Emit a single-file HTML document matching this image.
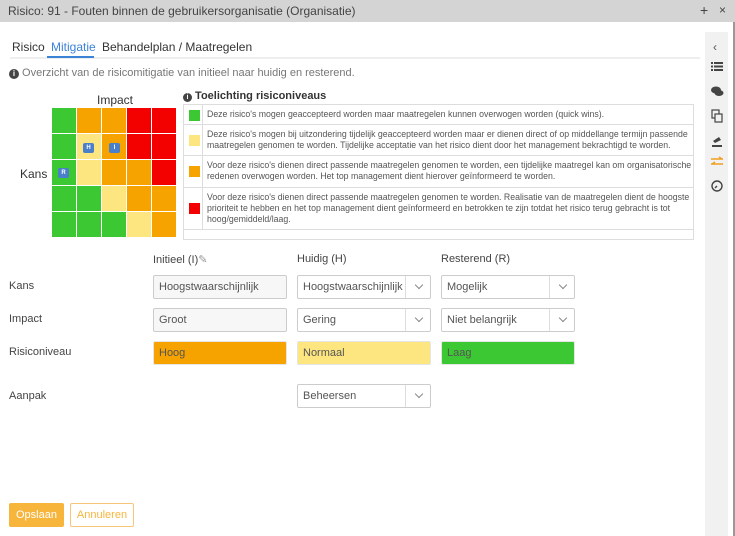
<!DOCTYPE html>
<html><head><style>
*{box-sizing:border-box;margin:0;padding:0}
body{width:735px;height:536px;background:#fff;font-family:"Liberation Sans",sans-serif;font-size:11px;color:#333;position:relative;overflow:hidden}
.a{position:absolute}
.title{left:0;top:0;width:735px;height:22px;background:#d4d4d4;font-size:12px;color:#444;padding:4px 0 0 8px}
.side{left:705px;top:32px;width:23px;height:504px;background:#f1f1f1}
.tab{top:40px;font-size:12px;color:#333}
.cell{position:absolute;width:24px;height:25px}
.G{background:#3cc832}.O{background:#f6a300}.R{background:#f30000}.Y{background:#fde680}
.badge{position:absolute;width:11px;height:10px;background:#4a7fc9;border-radius:2px;color:#fff;font-size:6px;text-align:center;line-height:10px;font-weight:bold}
.lg{left:183px;width:511px;border:1px solid #ddd;border-top:none;font-size:8.75px;color:#555;line-height:11px}
.sw{position:absolute;left:5px;width:11px;height:11px}
.lt{position:absolute;left:18px;top:0;bottom:0;border-left:1px solid #ddd;padding:4px 0 0 4px;right:0}
.lab{left:9px;font-size:11px;color:#444}
.hd{top:253px;font-size:11px;color:#444}
.in{width:134px;height:24px;border:1px solid #ccc;border-radius:2px;font-size:11px;color:#555;padding:5px 0 0 5px}
.dd{background:#fff}.dd:after{content:"";position:absolute;right:0;top:0;width:24px;height:22px;border-left:1px solid #ddd}
.chev{position:absolute;right:8px;top:6px;width:6px;height:6px;border-right:1.5px solid #888;border-bottom:1.5px solid #888;transform:rotate(45deg)}
</style></head><body>
<div class="a title">Risico: 91 - Fouten binnen de gebruikersorganisatie (Organisatie)<span class="a" style="left:700px;top:2px;font-size:14px">+</span><span class="a" style="left:719px;top:3px;font-size:12px">×</span></div>
<div class="a" style="left:733px;top:22px;width:2px;height:514px;background:#999"></div>
<div class="a side"></div>
<div class="a" style="left:713px;top:40px;font-size:12px;color:#555">‹</div>
<svg class="a" style="left:710px;top:61px" width="14" height="140" viewBox="0 0 14 140" fill="#444">
<rect x="1" y="1" width="2" height="2"/><rect x="4" y="1" width="9" height="2"/><rect x="1" y="4.5" width="2" height="2"/><rect x="4" y="4.5" width="9" height="2"/><rect x="1" y="8" width="2" height="2"/><rect x="4" y="8" width="9" height="2"/>
<ellipse cx="6" cy="29" rx="5" ry="3.5"/><ellipse cx="9" cy="32" rx="4.5" ry="3"/>
<rect x="2" y="49" width="7" height="8" fill="none" stroke="#444" stroke-width="1.2"/><rect x="5" y="53" width="7" height="8" fill="#f1f1f1" stroke="#444" stroke-width="1.2"/>
<path d="M2 84h10v2H2zM3 80l6-4 2 3-6 3z"/>
<path d="M1 98h12M9 96l3 2M1 103h12M5 101l-3 2" stroke="#f0a020" stroke-width="1.4" fill="none"/>
<circle cx="7" cy="125" r="5" fill="none" stroke="#444" stroke-width="1.4"/><path d="M7 125l-2 2" stroke="#444" stroke-width="1.4"/>
</svg>
<div class="a tab" style="left:12px">Risico</div>
<div class="a tab" style="left:51px;color:#3b83d6">Mitigatie</div>
<div class="a tab" style="left:102px">Behandelplan / Maatregelen</div>
<div class="a" style="left:10px;top:57px;width:690px;height:2px;background:#eee"></div>
<div class="a" style="left:47px;top:56px;width:47px;height:2px;background:#3b83d6"></div>
<div class="a" style="left:9px;top:67px;font-size:11px;color:#777"><span style="display:inline-block;width:10px;height:10px;border-radius:50%;background:#444;color:#fff;font-size:8px;text-align:center;line-height:10px;font-weight:bold">i</span> Overzicht van de risicomitigatie van initieel naar huidig en resterend.</div>
<div class="a" style="left:97px;top:93px;font-size:12px;color:#333">Impact</div>
<div class="a" style="left:20px;top:167px;font-size:12px;color:#333">Kans</div>
<div class="a" style="left:52px;top:108px;width:124px;height:130px">
<div class="cell G" style="left:0;top:0"></div><div class="cell O" style="left:25px;top:0"></div><div class="cell O" style="left:50px;top:0"></div><div class="cell R" style="left:75px;top:0"></div><div class="cell R" style="left:100px;top:0"></div>
<div class="cell G" style="left:0;top:26px"></div><div class="cell Y" style="left:25px;top:26px"></div><div class="cell O" style="left:50px;top:26px"></div><div class="cell R" style="left:75px;top:26px"></div><div class="cell R" style="left:100px;top:26px"></div>
<div class="cell G" style="left:0;top:52px"></div><div class="cell Y" style="left:25px;top:52px"></div><div class="cell O" style="left:50px;top:52px"></div><div class="cell O" style="left:75px;top:52px"></div><div class="cell R" style="left:100px;top:52px"></div>
<div class="cell G" style="left:0;top:78px"></div><div class="cell G" style="left:25px;top:78px"></div><div class="cell Y" style="left:50px;top:78px"></div><div class="cell O" style="left:75px;top:78px"></div><div class="cell O" style="left:100px;top:78px"></div>
<div class="cell G" style="left:0;top:104px"></div><div class="cell G" style="left:25px;top:104px"></div><div class="cell G" style="left:50px;top:104px"></div><div class="cell Y" style="left:75px;top:104px"></div><div class="cell O" style="left:100px;top:104px"></div>
<div class="badge" style="left:31px;top:35px">H</div><div class="badge" style="left:57px;top:35px">I</div><div class="badge" style="left:6px;top:60px">R</div>
</div>
<div class="a" style="left:183px;top:90px;font-size:11px;font-weight:bold;color:#333"><span style="display:inline-block;width:9px;height:9px;border-radius:50%;background:#444;color:#fff;font-size:7px;text-align:center;line-height:9px">i</span> Toelichting risiconiveaus</div>
<div class="a lg" style="top:104px;height:21px;border-top:1px solid #ddd"><div class="sw G" style="top:5px"></div><div class="lt" style="padding-top:4px">Deze risico's mogen geaccepteerd worden maar maatregelen kunnen overwogen worden (quick wins).</div></div>
<div class="a lg" style="top:125px;height:31px"><div class="sw Y" style="top:10px"></div><div class="lt">Deze risico's mogen bij uitzondering tijdelijk geaccepteerd worden maar er dienen direct of op middellange termijn passende maatregelen genomen te worden. Tijdelijke acceptatie van het risico dient door het management bekrachtigd te worden.</div></div>
<div class="a lg" style="top:156px;height:32px"><div class="sw O" style="top:10px"></div><div class="lt">Voor deze risico's dienen direct passende maatregelen genomen te worden, een tijdelijke maatregel kan om organisatorische redenen overwogen worden. Het top management dient hierover geïnformeerd te worden.</div></div>
<div class="a lg" style="top:188px;height:42px"><div class="sw R" style="top:15px"></div><div class="lt">Voor deze risico's dienen direct passende maatregelen genomen te worden. Realisatie van de maatregelen dient de hoogste prioriteit te hebben en het top management dient geïnformeerd en betrokken te zijn totdat het risico terug gebracht is tot hoog/gemiddeld/laag.</div></div>
<div class="a lg" style="top:230px;height:10px"></div>
<div class="a hd" style="left:153px">Initieel (I)<span style="color:#999">✎</span></div>
<div class="a hd" style="left:297px">Huidig (H)</div>
<div class="a hd" style="left:441px">Resterend (R)</div>
<div class="a lab" style="top:280px">Kans</div>
<div class="a lab" style="top:313px">Impact</div>
<div class="a lab" style="top:346px">Risiconiveau</div>
<div class="a lab" style="top:390px">Aanpak</div>
<div class="a in" style="left:153px;top:275px;background:#f7f7f7">Hoogstwaarschijnlijk</div>
<div class="a in dd" style="left:297px;top:275px">Hoogstwaarschijnlijk<i class="chev"></i></div>
<div class="a in dd" style="left:441px;top:275px">Mogelijk<i class="chev"></i></div>
<div class="a in" style="left:153px;top:308px;background:#f7f7f7">Groot</div>
<div class="a in dd" style="left:297px;top:308px">Gering<i class="chev"></i></div>
<div class="a in dd" style="left:441px;top:308px">Niet belangrijk<i class="chev"></i></div>
<div class="a in O" style="left:153px;top:341px;border-color:#e5e5e5">Hoog</div>
<div class="a in Y" style="left:297px;top:341px;border-color:#e5e5e5">Normaal</div>
<div class="a in G" style="left:441px;top:341px;border-color:#e5e5e5">Laag</div>
<div class="a in dd" style="left:297px;top:384px">Beheersen<i class="chev"></i></div>
<div class="a" style="left:9px;top:503px;width:55px;height:24px;background:#f7b53c;border-radius:2px;color:#fff;font-size:11px;text-align:center;line-height:24px">Opslaan</div>
<div class="a" style="left:70px;top:503px;width:64px;height:24px;border:1px solid #f7c67a;border-radius:2px;color:#f7b53c;font-size:11px;text-align:center;line-height:22px">Annuleren</div>
</body></html>
